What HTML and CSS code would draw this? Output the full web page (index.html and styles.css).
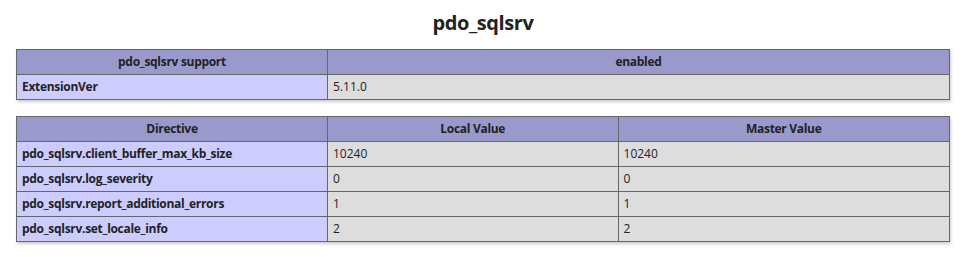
FILE: index.html
```html
<!DOCTYPE html>
<html>
<head>
<meta charset="utf-8">
<link rel="stylesheet" href="styles.css">
</head>
<body>
<div class="center">
<h2>pdo_sqlsrv</h2>
<table>
<tr class="h"><th>pdo_sqlsrv support</th><th>enabled</th></tr>
<tr><td class="e">ExtensionVer </td><td class="v">5.11.0 </td></tr>
</table>
<table>
<tr class="h"><th>Directive</th><th>Local Value</th><th>Master Value</th></tr>
<tr><td class="e">pdo_sqlsrv.client_buffer_max_kb_size</td><td class="v">10240</td><td class="v">10240</td></tr>
<tr><td class="e">pdo_sqlsrv.log_severity</td><td class="v">0</td><td class="v">0</td></tr>
<tr><td class="e">pdo_sqlsrv.report_additional_errors</td><td class="v">1</td><td class="v">1</td></tr>
<tr><td class="e">pdo_sqlsrv.set_locale_info</td><td class="v">2</td><td class="v">2</td></tr>
</table>
</div>
</body>
</html>
```
FILE: styles.css
```css
body {
  margin: 8px;
  background-color: #fff;
  color: #222;
  font-family: "Open Sans", sans-serif;
  font-size: 16px;
}
.center {
  text-align: center;
}
h2 {
  font-size: 20px;
  font-weight: bold;
  line-height: 27px;
  letter-spacing: -0.4px;
  margin: 1px 0 13px;
}
table {
  border-collapse: collapse;
  border: 0;
  width: 934px;
  box-shadow: 1px 2px 3px #ccc;
  margin: 0 auto 16px;
  text-align: left;
}
td, th {
  border: 1px solid #666;
  font-size: 12px;
  line-height: 16px;
  vertical-align: baseline;
  padding: 4px 5px;
}
th {
  text-align: center;
}
.h {
  background-color: #99c;
  font-weight: bold;
  letter-spacing: -0.3px;
}
.e {
  background-color: #ccf;
  width: 300px;
  font-weight: bold;
  letter-spacing: -0.3px;
}
.v {
  background-color: #ddd;
  max-width: 300px;
  overflow-x: auto;
  word-wrap: break-word;
}
```
